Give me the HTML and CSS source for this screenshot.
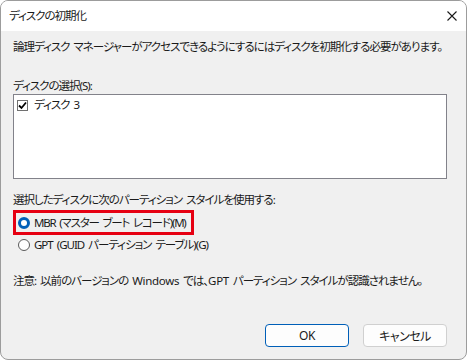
FILE: index.html
```html
<!DOCTYPE html>
<html lang="ja">
<head>
<meta charset="utf-8">
<link rel="stylesheet" href="styles.css">
</head>
<body>
<div class="window">
  <div class="titlebar">
    <span class="title">ディスクの初期化</span>
    <svg class="close" width="10" height="10" viewBox="0 0 10 10"><path d="M0.5 0.5L9.5 9.5M9.5 0.5L0.5 9.5" stroke="#1a1a1a" stroke-width="1.1" fill="none"/></svg>
  </div>
  <div class="content">
    <p class="line intro">論理ディスク マネージャーがアクセスできるようにするにはディスクを初期化する必要があります。</p>
    <p class="line label">ディスクの選択(S):</p>
    <div class="listbox">
      <div class="item">
        <span class="check"><svg width="9" height="9" viewBox="0 0 9 9"><path d="M1 4.5L3.5 7L8 1.5" stroke="#000" stroke-width="1.8" fill="none"/></svg></span>
        <span>ディスク 3</span>
      </div>
    </div>
    <p class="line label2">選択したディスクに次のパーティション スタイルを使用する:</p>
    <div class="highlight">
      <div class="radio-row"><span class="radio on"></span><span class="tight">MBR (マスター ブート レコード)(M)</span></div>
    </div>
    <div class="radio-row gpt"><span class="radio"></span><span>GPT (GUID パーティション テーブル)(G)</span></div>
    <p class="line note">注意: 以前のバージョンの <span class="lat">Windows</span> では、<span class="lat">GPT</span> パーティション スタイルが認識されません。</p>
    <div class="buttons">
      <button class="btn default">OK</button>
      <button class="btn">キャンセル</button>
    </div>
  </div>
</div>
</body>
</html>
```
FILE: styles.css
```css
html, body {
  margin: 0;
  padding: 0;
  background: #ffffff;
}
body {
  font-family: "Noto Sans", "Noto Sans CJK JP", sans-serif;
  font-size: 11.5px;
  color: #1a1a1a;
  font-feature-settings: "palt";
  letter-spacing: -1px;
  word-spacing: 2px;
}
.window {
  box-sizing: border-box;
  width: 467px;
  height: 360px;
  border: 1px solid #9c9c9c;
  border-radius: 8px;
  background: #f0f0f0;
  overflow: hidden;
  display: flex;
  flex-direction: column;
}
.titlebar {
  height: 30px;
  background: #ffffff;
  display: flex;
  align-items: center;
  justify-content: space-between;
  padding: 0 9px 0 8px;
  flex: none;
}
.title {
  line-height: 16px;
}
.content {
  padding: 8px 19px 0 12px;
  display: flex;
  flex-direction: column;
}
.line {
  margin: 0;
  line-height: 16px;
  white-space: nowrap;
}
.lat {
  letter-spacing: -0.3px;
}
.label {
  margin-top: 23px;
}
.listbox {
  box-sizing: border-box;
  height: 85px;
  background: #ffffff;
  border: 1px solid #82828a;
  padding: 2px 0 0 2px;
}
.item {
  display: flex;
  align-items: center;
  gap: 6px;
  line-height: 16px;
}
.check {
  box-sizing: border-box;
  width: 11px;
  height: 11px;
  border: 1px solid #707070;
  background: #fff;
  display: flex;
  align-items: center;
  justify-content: center;
  margin-left: 1px;
}
.check svg {
  display: block;
}
.label2 {
  margin-top: 13px;
}
.highlight {
  box-sizing: border-box;
  width: 181px;
  height: 25px;
  border: 3px solid #e60012;
  margin-top: 2px;
  padding-left: 2px;
  display: flex;
  align-items: center;
}
.radio-row {
  display: flex;
  align-items: center;
  gap: 4px;
  line-height: 16px;
  white-space: nowrap;
}
.tight {
  letter-spacing: -1.2px;
}
.gpt {
  margin-top: 2px;
  padding-left: 5px;
}
.radio {
  box-sizing: border-box;
  width: 12px;
  height: 12px;
  border-radius: 50%;
  border: 1px solid #5a5a5a;
  background: #ffffff;
}
.radio.on {
  border: 3.5px solid #005fb8;
  background: #ffffff;
}
.note {
  margin-top: 20px;
}
.buttons {
  display: flex;
  justify-content: flex-end;
  gap: 14px;
  margin-top: 35px;
}
.btn {
  box-sizing: border-box;
  width: 84px;
  height: 23px;
  background: #fdfdfd;
  border: 1px solid #d0d0d0;
  border-radius: 4px;
  font-family: "Noto Sans", "Noto Sans CJK JP", sans-serif;
  font-size: 12px;
  color: #1a1a1a;
  padding: 0;
  font-feature-settings: "palt";
  letter-spacing: -0.5px;
}
.btn.default {
  border-color: #005fb8;
}
```
